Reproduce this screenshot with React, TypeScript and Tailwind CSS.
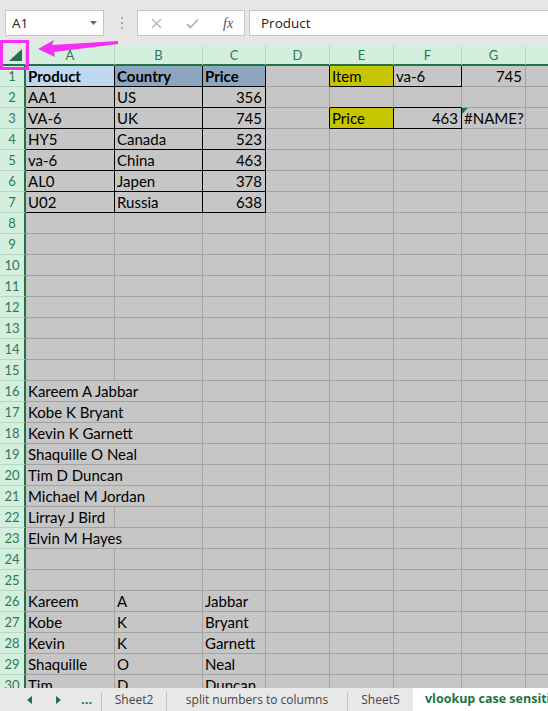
import React from "react"

type Cell = {
  t?: string
  bold?: boolean
  right?: boolean
  bg?: string
  span?: boolean
  rb?: boolean
  bb?: boolean
  err?: boolean
}

const letters = ["A", "B", "C", "D", "E", "F", "G", "H"]
const widths = ["w-[89px]", "w-[88px]", "w-[63px]", "w-[64px]", "w-[64px]", "w-[68px]", "w-[64px]", "w-[90px]"]

const rows: Record<number, Record<number, Cell>> = {}
const put = (r: number, c: number, cell: Cell) => {
  rows[r] = rows[r] || {}
  rows[r][c] = { ...(rows[r][c] || {}), ...cell }
}

// product table A1:C7
const table = [
  ["Product", "Country", "Price"],
  ["AA1", "US", "356"],
  ["VA-6", "UK", "745"],
  ["HY5", "Canada", "523"],
  ["va-6", "China", "463"],
  ["AL0", "Japen", "378"],
  ["U02", "Russia", "638"],
]
table.forEach((row, i) => {
  row.forEach((t, c) => {
    put(i + 1, c, { t, rb: true, bb: true, bold: i === 0, right: i > 0 && c === 2 })
  })
})
put(1, 0, { bg: "bg-[#bfd8ee]" })
put(1, 1, { bg: "bg-[#8ea6bd]" })
put(1, 2, { bg: "bg-[#8ea6bd]" })

// lookup block
put(1, 3, { rb: true })
put(1, 4, { t: "Item", bg: "bg-[#c6c600]", rb: true, bb: true })
put(1, 5, { t: "va-6", rb: true, bb: true })
put(1, 6, { t: "745", right: true })
put(2, 4, { bb: true })
put(2, 5, { bb: true })
put(3, 3, { rb: true })
put(3, 4, { t: "Price", bg: "bg-[#c6c600]", rb: true, bb: true })
put(3, 5, { t: "463", right: true, rb: true, bb: true })
put(3, 6, { t: "#NAME?", err: true })

const full = [
  "Kareem A Jabbar",
  "Kobe K Bryant",
  "Kevin K Garnett",
  "Shaquille O Neal",
  "Tim D Duncan",
  "Michael M Jordan",
  "Lirray J Bird",
  "Elvin M Hayes",
]
full.forEach((t, i) => put(16 + i, 0, { t, span: t !== "Lirray J Bird" }))

const split = [
  ["Kareem", "A", "Jabbar"],
  ["Kobe", "K", "Bryant"],
  ["Kevin", "K", "Garnett"],
  ["Shaquille", "O", "Neal"],
  ["Tim", "D", "Duncan"],
]
split.forEach((row, i) => row.forEach((t, c) => put(26 + i, c, { t })))

function Row({ n }: { n: number }) {
  const data = rows[n] || {}
  const cells: React.ReactNode[] = []
  for (let c = 0; c < 8; c++) {
    const cell = data[c] || {}
    const w = cell.span ? "w-[177px]" : widths[c]
    cells.push(
      <div
        key={c}
        className={`${w} relative h-full shrink-0 border-r border-b ${cell.rb ? "border-r-black" : "border-r-[#a3a3a3]"} ${
          cell.bb ? "border-b-black" : "border-b-[#a3a3a3]"
        } ${cell.bg ?? "bg-[#c6c6c6]"} ${cell.right ? "pr-[3px] text-right" : "pl-[2px]"} ${
          cell.bold ? "font-bold" : ""
        } whitespace-nowrap leading-[20px]`}
      >
        {cell.err && (
          <svg className="absolute left-0 top-0" width="6" height="6" viewBox="0 0 6 6">
            <polygon points="0,0 6,0 0,6" fill="#217346" />
          </svg>
        )}
        {cell.t}
      </div>
    )
    if (cell.span) c++
  }
  return (
    <div className="flex h-[21px] shrink-0">
      <div className="w-[26px] shrink-0 border-r-2 border-b border-r-[#217346] border-b-[#b5d8c3] bg-[#d5efdf] text-center text-[13px] leading-[20px] text-[#2b7a52]">
        {n}
      </div>
      {cells}
    </div>
  )
}

export default function App() {
  return (
    <div className="relative flex h-[711px] w-[548px] flex-col overflow-hidden bg-[#c6c6c6] font-[Lato,sans-serif] text-[15px] text-black">
      {/* formula bar */}
      <div className="flex h-[46px] shrink-0 items-start bg-[#e6e6e6] pt-[10px] font-['Open_Sans',sans-serif] text-[13.5px] text-[#222]">
        <div className="ml-[5px] flex h-[26px] w-[99px] items-center justify-between border border-[#c6c6c6] bg-white pl-[6px] pr-[6px]">
          <span>A1</span>
          <svg width="7" height="4" viewBox="0 0 7 4">
            <polygon points="0,0 7,0 3.5,4" fill="#6b6b6b" />
          </svg>
        </div>
        <div className="ml-[17px] flex h-[26px] flex-col items-center justify-center gap-[3px]">
          <div className="h-[2px] w-[2px] bg-[#a8a8a8]" />
          <div className="h-[2px] w-[2px] bg-[#a8a8a8]" />
          <div className="h-[2px] w-[2px] bg-[#a8a8a8]" />
        </div>
        <div className="ml-[14px] flex h-[26px] w-[108px] items-center border border-[#c6c6c6] bg-white">
          <svg className="ml-[13px]" width="11" height="11" viewBox="0 0 11 11">
            <path d="M1 1 L10 10 M10 1 L1 10" stroke="#b5b5b5" strokeWidth="1.4" />
          </svg>
          <svg className="ml-[24px]" width="13" height="11" viewBox="0 0 13 11">
            <path d="M1 6 L4.5 9.5 L12 1.5" stroke="#b5b5b5" strokeWidth="1.8" fill="none" />
          </svg>
          <span className="ml-[24px] font-['Liberation_Serif',serif] text-[14px] italic text-[#555]">fx</span>
        </div>
        <div className="ml-[4px] flex h-[26px] flex-1 items-center border border-r-0 border-[#c6c6c6] bg-white pl-[11px]">
          Product
        </div>
      </div>

      {/* column headers */}
      <div className="flex h-[20px] shrink-0">
        <div className="relative w-[26px] shrink-0 border-r border-b-2 border-r-[#b5d8c3] border-b-[#217346] bg-[#e2e8e4]">
          <svg className="absolute bottom-[3px] right-[3px]" width="13" height="12" viewBox="0 0 13 12">
            <polygon points="13,0 13,12 0,12" fill="#217346" />
          </svg>
        </div>
        {letters.map((l, i) => (
          <div
            key={l}
            className={`${widths[i]} shrink-0 border-r border-b-2 border-r-[#b5d8c3] border-b-[#217346] bg-[#d5efdf] text-center text-[13px] leading-[18px] text-[#2b7a52]`}
          >
            {l}
          </div>
        ))}
      </div>

      {/* grid */}
      <div className="flex-1 overflow-hidden">
        {Array.from({ length: 30 }, (_, i) => (
          <Row key={i} n={i + 1} />
        ))}
      </div>

      {/* sheet tabs */}
      <div className="flex h-[23px] shrink-0 items-stretch bg-[#e8e8e8] font-['Open_Sans',sans-serif] text-[12px] text-[#444]">
        <div className="flex w-[101px] shrink-0 items-center">
          <svg className="ml-[27px]" width="5" height="8" viewBox="0 0 5 8">
            <polygon points="5,0 5,8 0,4" fill="#217346" />
          </svg>
          <svg className="ml-[24px]" width="5" height="8" viewBox="0 0 5 8">
            <polygon points="0,0 0,8 5,4" fill="#217346" />
          </svg>
          <span className="ml-[20px] text-[13px] font-bold leading-none text-[#217346]">...</span>
        </div>
        <div className="mt-[4px] h-[19px] w-px shrink-0 bg-[#c2c2c2]" />
        <div className="flex w-[64px] shrink-0 items-center justify-center">Sheet2</div>
        <div className="mt-[4px] h-[19px] w-px shrink-0 bg-[#c2c2c2]" />
        <div className="flex w-[180px] shrink-0 items-center justify-center">split numbers to columns</div>
        <div className="mt-[4px] h-[19px] w-px shrink-0 bg-[#c2c2c2]" />
        <div className="flex w-[65px] shrink-0 items-center justify-center">Sheet5</div>
        <div className="flex flex-1 items-center whitespace-nowrap bg-white pl-[12px] text-[12.5px] font-bold text-[#217346]">
          vlookup case sensitive
        </div>
      </div>

      {/* annotation overlay */}
      <div className="absolute left-0 top-[40px] h-[30px] w-[29px] border-[3px] border-[#f22ff2]" />
      <svg className="pointer-events-none absolute left-0 top-0" width="548" height="80" viewBox="0 0 548 80">
        <polygon points="38,49 54,40 52,45 118,41 118,44 54,52 55,57" fill="#f22ff2" />
      </svg>
    </div>
  )
}
